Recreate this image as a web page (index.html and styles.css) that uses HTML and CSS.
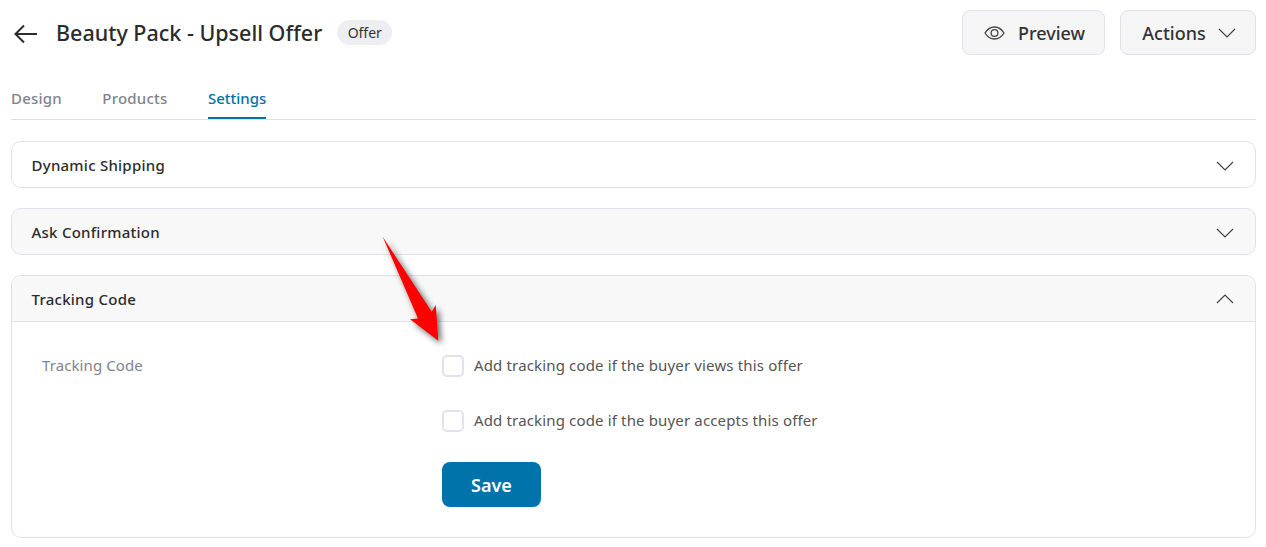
FILE: index.html

```html
<!DOCTYPE html>
<html lang="en">
<head>
    <meta charset="UTF-8">
    <title>Beauty Pack - Upsell Offer</title>
    <link rel="stylesheet" href="styles.css">
</head>
<body>
    <div class="page">
        <header class="top">
            <div class="top-left">
                <svg class="back" width="24" height="20" viewBox="0 0 24 20" fill="none" stroke="#2c2c2c" stroke-width="2">
                    <path d="M24 10H2.500M11 1.500L2.500 10L11 18.500"/>
                </svg>
                <h1>Beauty Pack - Upsell Offer</h1>
                <span class="badge">Offer</span>
            </div>
            <div class="top-right">
                <button class="btn btn-preview">
                    <svg width="21" height="14" viewBox="0 0 21 14" fill="none" stroke="#444" stroke-width="1.3">
                        <path d="M1 7C3.500 3 6.800 1 10.500 1S17.500 3 20 7C17.500 11 14.200 13 10.500 13S3.500 11 1 7Z"/>
                        <circle cx="10.500" cy="7" r="3.400"/>
                    </svg>
                    Preview
                </button>
                <button class="btn btn-actions">
                    Actions
                    <svg class="chev" width="18" height="10" viewBox="0 0 18 10" fill="none" stroke="#444" stroke-width="1.2">
                        <path d="M1 1L9 9L17 1"/>
                    </svg>
                </button>
            </div>
        </header>

        <nav class="tabs">
            <a class="tab">Design</a>
            <a class="tab">Products</a>
            <a class="tab active">Settings</a>
        </nav>

        <section class="panel panel-white">
            <div class="panel-head">
                <span>Dynamic Shipping</span>
                <svg class="chev-down" width="18" height="10" viewBox="0 0 18 10" fill="none" stroke="#444" stroke-width="1.2"><path d="M1 1L9 9L17 1"/></svg>
            </div>
        </section>

        <section class="panel">
            <div class="panel-head">
                <span>Ask Confirmation</span>
                <svg class="chev-down" width="18" height="10" viewBox="0 0 18 10" fill="none" stroke="#444" stroke-width="1.2"><path d="M1 1L9 9L17 1"/></svg>
            </div>
        </section>

        <section class="panel panel-open">
            <div class="panel-head">
                <span>Tracking Code</span>
                <svg width="18" height="10" viewBox="0 0 18 10" fill="none" stroke="#444" stroke-width="1.2"><path d="M1 9L9 1L17 9"/></svg>
            </div>
            <div class="panel-body">
                <div class="field-label">Tracking Code</div>
                <div class="field">
                    <label class="check"><span class="box"></span>Add tracking code if the buyer views this offer</label>
                    <label class="check"><span class="box"></span>Add tracking code if the buyer accepts this offer</label>
                    <button class="save">Save</button>
                </div>
            </div>
        </section>
    </div>

    <svg class="pointer" width="70" height="116" viewBox="0 0 70 116">
        <polygon points="2.700,1.700 51.700,76.700 55.700,70 58.300,105.700 30,84.300 38,83.500" fill="#fe0000"/>
    </svg>
</body>
</html>
```

FILE: styles.css

```css
* {
    box-sizing: border-box;
}
body {
    margin: 0;
    font-family: "Noto Sans", "Open Sans", Arial, sans-serif;
    background-color: #fff;
    color: #2c2c2c;
}
.page {
    padding: 10px 10px 0 11px;
}
.top {
    display: flex;
    justify-content: space-between;
    align-items: center;
    height: 45px;
}
.top-left {
    display: flex;
    align-items: center;
    margin-top: -1px;
}
.back {
    margin: 3px 0 0 2px;
}
h1 {
    margin: 2px 15px 0 19px;
    font-size: 21.500px;
    font-weight: 500;
    line-height: 30px;
    color: #2b2b2b;
}
.badge {
    display: inline-block;
    width: 55px;
    height: 25px;
    line-height: 25px;
    text-align: center;
    font-size: 14px;
    background-color: #eceef1;
    border-radius: 13px;
    color: #333;
}
.top-right {
    display: flex;
    gap: 15px;
}
.btn {
    display: flex;
    align-items: center;
    justify-content: center;
    height: 45px;
    padding: 0 0 0 2px;
    font-family: inherit;
    font-size: 18px;
    font-weight: 500;
    color: #333;
    background-color: #f5f5f6;
    border: 1px solid #e3e3ea;
    border-radius: 8px;
}
.btn-preview {
    width: 143px;
    gap: 13px;
}
.btn-actions {
    width: 136px;
    gap: 12px;
    border-color: #dfdfee;
}
.tabs {
    display: flex;
    gap: 40.500px;
    height: 65px;
    padding-top: 33px;
    border-bottom: 1px solid #dfdfe9;
}
.tab {
    height: 31px;
    line-height: 20px;
    font-size: 15px;
    font-weight: 500;
    letter-spacing: 0.2px;
    color: #82838e;
}
.tab.active {
    letter-spacing: 0;
    color: #0073aa;
    border-bottom: 2px solid #0073aa;
}
.panel {
    margin-top: 21px;
    border: 1px solid #e1e1ec;
    border-radius: 10px;
    background-color: #f8f8f9;
    overflow: hidden;
}
.panel + .panel {
    margin-top: 20px;
}
.panel-white {
    background-color: #fff;
}
.panel-open {
    background-color: #fff;
}
.panel-head {
    display: flex;
    justify-content: space-between;
    align-items: center;
    height: 45px;
    padding: 0 21px 0 19.500px;
    font-size: 15px;
    font-weight: 500;
    letter-spacing: 0.25px;
    color: #2b2b2b;
}
.chev-down {
    margin-top: 2px;
}
.panel-open .panel-head {
    background-color: #f8f8f9;
    border-bottom: 1px solid #e1e1ec;
    height: 46px;
}
.panel-body {
    display: flex;
    height: 215px;
    padding: 22px 0 0 30px;
}
.field-label {
    width: 400px;
    font-size: 15px;
    line-height: 42px;
    letter-spacing: 0.1px;
    color: #82838e;
}
.field {
    display: flex;
    flex-direction: column;
}
.check {
    display: flex;
    align-items: center;
    gap: 10px;
    height: 44px;
    margin-bottom: 11px;
    padding-bottom: 2px;
    font-size: 15px;
    letter-spacing: 0.15px;
    color: #555;
}
.box {
    width: 22px;
    height: 22px;
    margin-top: 2px;
    border: 2px solid #e2e2ef;
    border-radius: 5px;
    background-color: #fff;
}
.save {
    width: 99px;
    height: 45px;
    margin-top: 8px;
    font-family: inherit;
    font-size: 18px;
    font-weight: 600;
    color: #fff;
    background-color: #0073aa;
    border: none;
    border-radius: 8px;
}
.pointer {
    position: absolute;
    left: 380px;
    top: 235px;
    overflow: visible;
    filter: drop-shadow(3px 3px 3px rgba(0, 0, 0, 0.6));
}
```
